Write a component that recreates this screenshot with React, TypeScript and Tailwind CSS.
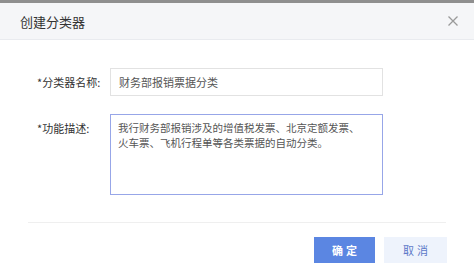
import React from "react";

export default function App() {
  const font = { fontFamily: '"Noto Sans CJK SC", "Noto Sans", sans-serif' };
  return (
    <div className="w-[474px] h-[279px] bg-white flex flex-col overflow-hidden" style={font}>
      <div className="h-[3px] bg-[#8f8f8f]" />
      <div className="h-[37px] bg-[#f5f6f8] border-b border-[#e9ebef] flex items-center justify-between pl-[20px] pr-[14px]">
        <span className="text-[13px] leading-none text-[#333]">创建分类器</span>
        <svg width="12" height="12" viewBox="0 0 12 12" className="mr-[1px]">
          <path d="M1.5 1.5 L10.5 10.5 M10.5 1.5 L1.5 10.5" stroke="#9a9a9a" strokeWidth="1.3" />
        </svg>
      </div>
      <div className="flex flex-col pl-[37px] pt-[28px]">
        <div className="flex items-center h-[28px]">
          <span className="w-[73px] text-[11px] leading-none text-[#333]">*分类器名称:</span>
          <div className="w-[273px] h-[28px] border border-[#e2e2e2] flex items-center pl-[8px] text-[11px] leading-none text-[#555]">
            财务部报销票据分类
          </div>
        </div>
        <div className="flex items-start mt-[18px]">
          <span className="w-[73px] pt-[7px] text-[11px] leading-[15px] text-[#333]">*功能描述:</span>
          <div className="w-[273px] h-[81px] border border-[#97a6e8] px-[7px] pt-[5px] text-[10.5px] leading-[15px] text-[#555]">
            我行财务部报销涉及的增值税发票、北京定额发票、
            <br />
            火车票、飞机行程单等各类票据的自动分类。
          </div>
        </div>
      </div>
      <div className="mt-[27px] mx-[28px] h-px bg-[#efefef]" />
      <div className="flex justify-end gap-[9px] pr-[27px] mt-[14px]">
        <button className="w-[61px] h-[26px] bg-[#5b86e2] text-white text-[11px] font-bold tracking-[3px] pl-[3px]">确定</button>
        <button className="w-[63px] h-[26px] bg-[#eef3fc] text-[#5c78c8] text-[11px] tracking-[3px] pl-[3px]">取消</button>
      </div>
    </div>
  );
}
